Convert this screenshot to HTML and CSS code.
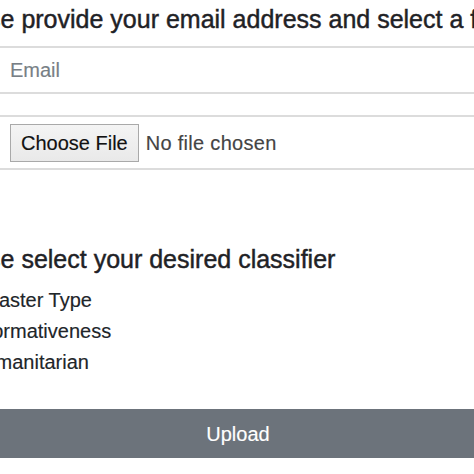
FILE: index.html
```html
<!DOCTYPE html>
<html lang="en">
<head>
<meta charset="utf-8">
<title>Upload</title>
<link rel="stylesheet" href="styles.css">
</head>
<body>
<div class="page">
  <h5 class="title">Please provide your email address and select a file</h5>
  <form class="form">
    <input class="control" type="email" placeholder="Email">
    <label class="file-box">
      <input class="file-input" type="file" hidden>
      <span class="file-btn">Choose File</span>
      <span class="file-name">No file chosen</span>
    </label>
    <h5 class="title title-second">Please select your desired classifier</h5>
    <div class="options">
      <label class="option"><input class="radio" type="radio" name="classifier"><span>Disaster Type</span></label>
      <label class="option"><input class="radio" type="radio" name="classifier"><span>Informativeness</span></label>
      <label class="option"><input class="radio" type="radio" name="classifier"><span>Humanitarian</span></label>
    </div>
    <button class="upload" type="button">Upload</button>
  </form>
</div>
</body>
</html>
```
FILE: styles.css
```css
html, body {
  margin: 0;
  padding: 0;
  overflow: hidden;
  background: #ffffff;
}

body {
  font-family: "Liberation Sans", Arial, sans-serif;
  font-size: 20px;
  color: #212529;
  -webkit-text-stroke: 0.15px currentColor;
}

.page {
  width: 600px;
  margin-left: -62px;
  padding-top: 4px;
}

.title {
  margin: 0 0 12px;
  font-size: 25px;
  line-height: 30px;
  font-weight: 400;
  color: #1f2226;
  -webkit-text-stroke: 0.45px currentColor;
}

.form {
  display: flex;
  flex-direction: column;
}

.control {
  box-sizing: border-box;
  height: 48px;
  margin: 0 57px;
  padding: 0 13px;
  border: 2px solid #dcdcdc;
  border-radius: 0;
  font-family: inherit;
  font-size: 20px;
  color: #495057;
  background: #fff;
  outline: none;
}

.control::placeholder {
  color: #787f86;
}

.file-box {
  box-sizing: border-box;
  height: 55px;
  margin: 21px 57px 0;
  padding: 7px 13px 6px;
  border: 2px solid #dcdcdc;
  display: flex;
  align-items: center;
  gap: 7px;
}

.file-btn {
  box-sizing: border-box;
  height: 38px;
  padding: 0 10px;
  display: flex;
  align-items: center;
  border: 1px solid #a9a9a9;
  background: linear-gradient(#f4f4f4, #e9e9e9);
  color: #111;
  font-size: 20px;
}

.file-name {
  color: #444;
  font-size: 20px;
  letter-spacing: 0.3px;
}

.title-second {
  margin-top: 74px;
  margin-bottom: 11px;
}

.options {
  display: flex;
  flex-direction: column;
  padding-left: 8px;
}

.option {
  display: flex;
  align-items: center;
  gap: 11px;
  line-height: 31px;
  color: #212529;
}

.radio {
  width: 13px;
  height: 13px;
  margin: 0;
}

.upload {
  box-sizing: border-box;
  height: 49px;
  margin: 31px 57px 0;
  padding: 2px 0 0;
  border: 0;
  border-radius: 0;
  background: #6c737b;
  color: #ffffff;
  font-family: inherit;
  font-size: 20px;
}
```
